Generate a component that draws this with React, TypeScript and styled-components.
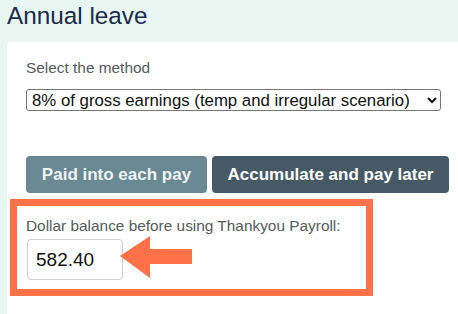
import React from "react";
import styled, { createGlobalStyle } from "styled-components";

const Global = createGlobalStyle`
  html, body {
    margin: 0;
    padding: 0;
    background: #e8f7f1;
    overflow: hidden;
  }
  body {
    font-family: "Liberation Sans", Arial, sans-serif;
  }
`;

const Page = styled.div`
  width: 458px;
  height: 314px;
  padding-left: 7px;
  box-sizing: border-box;
  overflow: hidden;
`;

const Title = styled.h1`
  margin: 2px 0 12px;
  font-size: 24.3px;
  line-height: 28px;
  font-weight: 400;
  color: #1c2a4d;
`;

const Card = styled.div`
  background: #ffffff;
  border-radius: 4px 0 0 0;
  padding: 16px 0 0 19px;
  min-height: 300px;
  box-sizing: border-box;
`;

const Label = styled.div`
  font-size: 15.4px;
  line-height: 20px;
  color: #555b5e;
`;

const MethodSelect = styled.select`
  display: block;
  margin-top: 11px;
  width: 415px;
  height: 22px;
  font-family: "Liberation Sans", Arial, sans-serif;
  font-size: 16.8px;
  color: #111;
  background: #fff;
  border: 1px solid #767676;
  border-radius: 3px;
  padding: 0 1px;
`;

const ButtonRow = styled.div`
  display: flex;
  gap: 5px;
  margin-top: 45px;
`;

const ToggleButton = styled.button<{ $active?: boolean; $w: number }>`
  width: ${(p) => p.$w}px;
  height: 37px;
  border: none;
  border-radius: 4px;
  background: ${(p) => (p.$active ? "#455a64" : "#6a8993")};
  color: ${(p) => (p.$active ? "#ffffff" : "#eef3f4")};
  font-family: "Liberation Sans", Arial, sans-serif;
  font-weight: 700;
  font-size: 17px;
  padding: 0;
  cursor: pointer;
`;

const Highlight = styled.div`
  position: relative;
  margin: 6px 0 0 -16px;
  width: 363px;
  box-sizing: border-box;
  border: 7px solid #ff7149;
  padding: 10px 9px 9px 9px;
`;

const AmountInput = styled.input`
  display: block;
  margin: 3px 0 0 1px;
  width: 96px;
  height: 41px;
  box-sizing: border-box;
  border: 1px solid #cfcfcf;
  border-radius: 4px;
  padding: 0 8px;
  font-family: "Liberation Sans", Arial, sans-serif;
  font-size: 19px;
  color: #111;
  outline: none;
`;

const Arrow = styled.svg`
  position: absolute;
  left: 103px;
  top: 30px;
`;

export default function App() {
  return (
    <>
      <Global />
      <Page>
        <Title>Annual leave</Title>
        <Card>
          <Label>Select the method</Label>
          <MethodSelect defaultValue="8">
            <option value="8">8% of gross earnings (temp and irregular scenario)</option>
          </MethodSelect>
          <ButtonRow>
            <ToggleButton $w={181}>Paid into each pay</ToggleButton>
            <ToggleButton $w={237} $active>
              Accumulate and pay later
            </ToggleButton>
          </ButtonRow>
          <Highlight>
            <Label>Dollar balance before using Thankyou Payroll:</Label>
            <AmountInput defaultValue="582.40" />
            <Arrow width="72" height="42" viewBox="0 0 72 42">
              <path d="M0 20 L30 0 L30 13 L72 13 L72 28 L30 28 L30 42 Z" fill="#ff7149" />
            </Arrow>
          </Highlight>
        </Card>
      </Page>
    </>
  );
}
